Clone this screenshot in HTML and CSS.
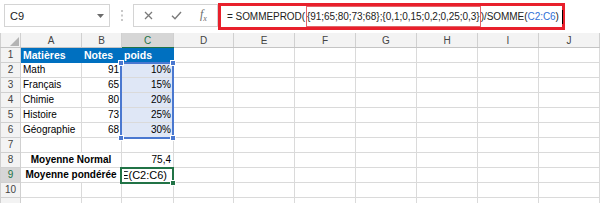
FILE: index.html
```html
<!DOCTYPE html>
<html lang="fr">
<head>
  <meta charset="UTF-8" />
  <title>Moyenne pondérée</title>
  <link rel="stylesheet" href="styles.css">
</head>
<body>

<div class="toolbar">
  <div class="namebox">
    <span>C9</span>
    <svg class="caret" width="7" height="4" viewBox="0 0 7 4"><path d="M0 0H7L3.5 4Z" fill="#6b6b6b"/></svg>
  </div>
  <div class="grip">
    <svg width="2" height="11" viewBox="0 0 2 11"><rect x="0" y="0" width="2" height="2" fill="#c8c8c8"/><rect x="0" y="4.5" width="2" height="2" fill="#c8c8c8"/><rect x="0" y="9" width="2" height="2" fill="#c8c8c8"/></svg>
  </div>
  <div class="fxbox">
    <svg width="9" height="9" viewBox="0 0 9 9"><path d="M1 1L8 8M8 1L1 8" stroke="#7a7a7a" stroke-width="1.3" fill="none"/></svg>
    <svg width="11" height="9" viewBox="0 0 11 9"><path d="M1 4.8L4 7.8L10 1" stroke="#7a7a7a" stroke-width="1.4" fill="none"/></svg>
    <span class="fx">f<sub>x</sub></span>
  </div>
  <div class="formula">
    <span class="eq">= SOMMEPROD(<span class="arg">{91;65;80;73;68};{0,1;0,15;0,2;0,25;0,3}</span>)/SOMME(<span class="ref">C2:C6</span>)</span><span class="cursor"></span>
  </div>
</div>

<div class="sheet-wrap">
  <table class="sheet">
    <colgroup>
      <col style="width:20px"><col style="width:61px"><col style="width:40px"><col style="width:52px">
      <col style="width:60px"><col style="width:61px"><col style="width:61px"><col style="width:61px">
      <col style="width:61px"><col style="width:61px"><col style="width:61px">
    </colgroup>
    <tr class="head">
      <th class="corner"><svg width="9" height="9" viewBox="0 0 9 9"><path d="M9 0V9H0Z" fill="#b4b4b4"/></svg></th>
      <th>A</th><th>B</th><th class="on">C</th><th>D</th><th>E</th><th>F</th><th>G</th><th>H</th><th>I</th><th>J</th>
    </tr>
    <tr>
      <th>1</th><td class="title">Matières</td><td class="title">Notes</td><td class="title">poids</td>
      <td></td><td></td><td></td><td></td><td></td><td></td><td></td>
    </tr>
    <tr>
      <th>2</th><td>Math</td><td class="num">91</td><td class="num sel">10%</td>
      <td></td><td></td><td></td><td></td><td></td><td></td><td></td>
    </tr>
    <tr>
      <th>3</th><td>Français</td><td class="num">65</td><td class="num sel">15%</td>
      <td></td><td></td><td></td><td></td><td></td><td></td><td></td>
    </tr>
    <tr>
      <th>4</th><td>Chimie</td><td class="num">80</td><td class="num sel">20%</td>
      <td></td><td></td><td></td><td></td><td></td><td></td><td></td>
    </tr>
    <tr>
      <th>5</th><td>Histoire</td><td class="num">73</td><td class="num sel">25%</td>
      <td></td><td></td><td></td><td></td><td></td><td></td><td></td>
    </tr>
    <tr>
      <th>6</th><td>Géographie</td><td class="num">68</td><td class="num sel">30%</td>
      <td></td><td></td><td></td><td></td><td></td><td></td><td></td>
    </tr>
    <tr>
      <th>7</th><td></td><td></td><td></td>
      <td></td><td></td><td></td><td></td><td></td><td></td><td></td>
    </tr>
    <tr>
      <th>8</th><td class="label" colspan="2">Moyenne Normal</td><td class="num">75,4</td>
      <td></td><td></td><td></td><td></td><td></td><td></td><td></td>
    </tr>
    <tr>
      <th class="on">9</th><td class="label" colspan="2">Moyenne pondérée</td><td><div class="edit"><span>E(C2:C6)</span></div></td>
      <td></td><td></td><td></td><td></td><td></td><td></td><td></td>
    </tr>
    <tr>
      <th>10</th><td></td><td></td><td></td>
      <td></td><td></td><td></td><td></td><td></td><td></td><td></td>
    </tr>
    <tr>
      <th></th><td></td><td></td><td></td>
      <td></td><td></td><td></td><td></td><td></td><td></td><td></td>
    </tr>
  </table>

  <div class="range">
    <span class="handle h-tl"></span>
    <span class="handle h-tr"></span>
    <span class="handle h-bl"></span>
    <span class="handle h-br"></span>
  </div>
  <div class="active"></div>
</div>

</body>
</html>
```

FILE: styles.css
```css
html, body {
  margin: 0;
  padding: 0;
  background: #ffffff;
  font-family: 'Liberation Sans', Arial, sans-serif;
  color: #000;
  height: 203px;
  overflow: hidden;
}

/* ---- formula bar ---- */

.toolbar {
  display: flex;
  align-items: flex-start;
  height: 33px;
  padding: 4px 0 0 4px;
  box-sizing: border-box;
  background: #ffffff;
}

.namebox {
  width: 106px;
  height: 23px;
  box-sizing: border-box;
  border: 1px solid #d4d4d4;
  display: flex;
  align-items: center;
  justify-content: space-between;
  padding: 0 5px 0 5px;
  font-size: 11px;
  color: #222;
}

.grip {
  width: 23px;
  display: flex;
  justify-content: center;
  padding-top: 6px;
}

.fxbox {
  width: 85px;
  height: 23px;
  box-sizing: border-box;
  border: 1px solid #d4d4d4;
  display: flex;
  align-items: center;
  padding-left: 10px;
  gap: 18px;
}

.fx {
  font-family: 'Liberation Serif', serif;
  font-style: italic;
  font-size: 12px;
  color: #6b6b6b;
}

.fx sub {
  font-size: 8px;
}

.formula {
  width: 347px;
  height: 27px;
  margin-top: -1px;
  box-sizing: border-box;
  border: 3px solid #e8202c;
  display: flex;
  align-items: center;
  padding-left: 6px;
  font-size: 10px;
  letter-spacing: -0.05px;
  white-space: nowrap;
  color: #222;
}

.arg {
  border: 1px solid #e4646a;
  padding: 4px 0;
  margin-left: 1px;
}

.ref {
  color: #2f6fd6;
}

.cursor {
  display: inline-block;
  width: 1px;
  height: 14px;
  margin-left: 3px;
  background: #000;
}

/* ---- grid ---- */

.sheet-wrap {
  position: relative;
}

.sheet {
  table-layout: fixed;
  border-collapse: collapse;
  width: 599px;
  font-size: 10px;
}

.sheet th, .sheet td {
  height: 14px;
  padding: 0 2px;
  border: 1px solid #dadada;
  white-space: nowrap;
  overflow: hidden;
  line-height: 14px;
}

.sheet th {
  font-weight: normal;
  color: #444;
  background: #f3f3f3;
  border-color: #d0d0d0;
  text-align: center;
}

.sheet .head th {
  height: 13px;
  line-height: 13px;
  border-top: none;
  border-bottom-color: #c4c4c4;
}

.sheet th.corner {
  text-align: right;
  vertical-align: bottom;
  padding: 0 1px 1px 0;
  line-height: 0;
}

.sheet th.on {
  background: #d6d6d6;
  color: #217346;
}

.sheet .head th.on {
  border-bottom: 1px solid #217346;
}

.sheet td.title {
  background: #0070c0;
  border-color: #0070c0;
  color: #fff;
  font-weight: bold;
  font-size: 10.5px;
}

.sheet td.num {
  text-align: right;
}

.sheet td.label {
  font-weight: bold;
  text-align: center;
}

.sheet td.sel {
  background: #dfe7f6;
}

.edit {
  display: flex;
  justify-content: flex-end;
  overflow: hidden;
  padding-right: 4px;
  font-size: 11px;
}

/* ---- overlays: selected range and active cell ---- */

.range {
  position: absolute;
  left: 120px;
  top: 29px;
  width: 54px;
  height: 77px;
  box-sizing: border-box;
  border: 2px solid #4a78d0;
}

.handle {
  position: absolute;
  width: 4px;
  height: 4px;
  background: #4a78d0;
  border: 1px solid #fff;
}

.h-tl { left: -4px; top: -4px; }
.h-tr { right: -4px; top: -4px; }
.h-bl { left: -4px; bottom: -4px; }
.h-br { right: -4px; bottom: -4px; }

.active {
  position: absolute;
  left: 120px;
  top: 134px;
  width: 54px;
  height: 17px;
  box-sizing: border-box;
  border: 2px solid #217346;
}

.active::after {
  content: "";
  position: absolute;
  right: -4px;
  bottom: -4px;
  width: 4px;
  height: 4px;
  background: #217346;
  border: 1px solid #fff;
}
```
